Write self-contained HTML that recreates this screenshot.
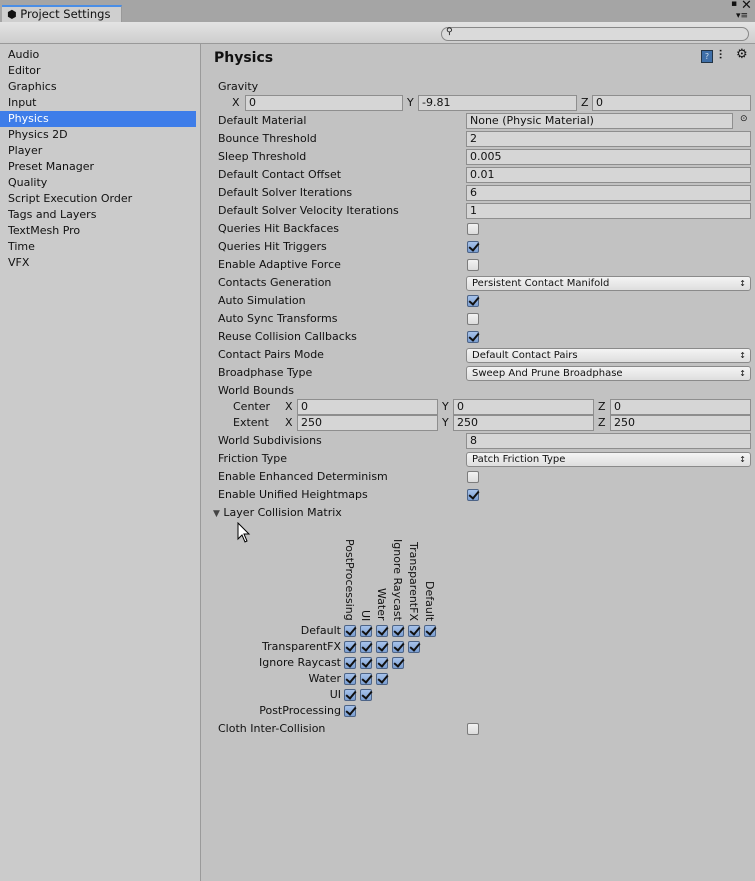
<!DOCTYPE html>
<html><head><meta charset="utf-8"><style>
*{margin:0;padding:0;box-sizing:border-box}
body{width:755px;height:881px;background:#c2c2c2;font-family:"DejaVu Sans","Liberation Sans",sans-serif;font-size:11px;color:#111;position:relative;overflow:hidden}
.a{position:absolute;white-space:nowrap}
.l{position:absolute;height:16px;line-height:16px;white-space:nowrap}
.f{position:absolute;height:16px;line-height:14px;background:#d6d6d6;border:1px solid #8e8e8e;padding-left:3px;white-space:nowrap}
.cb{position:absolute;width:12px;height:12px;border:1px solid #7c7c7c;border-radius:2px;background:linear-gradient(#f2f2f2,#dcdcdc)}
.ck{background:linear-gradient(#a6c2ea,#7c9fd2);border-color:#4d6487}
.ck::after{content:"";position:absolute;left:3px;top:-1px;width:4px;height:8px;border:solid #111;border-width:0 2px 2px 0;transform:rotate(40deg)}
.dd{position:absolute;left:466px;width:285px;height:15px;line-height:13px;border:1px solid #8a8a8a;border-radius:3px;background:linear-gradient(#f4f4f4,#dedede);padding-left:5px;font-size:10px}
.dd::after{content:"\2195";position:absolute;right:4px;top:0;font-size:8px}
.side div{position:absolute;left:8px;height:16px;line-height:16px}
.vt{position:absolute;writing-mode:vertical-rl;line-height:14px;width:14px;bottom:260px}
</style></head><body>
<div class="a" style="left:0;top:0;width:755px;height:22px;background:#a5a5a5"></div>
<div class="a" style="left:2px;top:5px;width:120px;height:18px;background:#cfcfcf;border-top:2px solid #4a8ee6;border-right:1px solid #999"></div>
<div class="a" style="left:7px;top:6px;font-size:11.5px;line-height:16px"><span style="font-size:11px">⬢</span> Project Settings</div>
<div class="a" style="left:731px;top:-1px;font-size:9px">▪</div>
<div class="a" style="left:741px;top:-2px;font-size:13px">✕</div>
<div class="a" style="left:736px;top:11px;font-size:9px">▾≡</div>
<div class="a" style="left:0;top:22px;width:755px;height:22px;background:linear-gradient(#e4e4e4,#cdcdcd);border-bottom:1px solid #999"></div>
<div class="a" style="left:441px;top:27px;width:308px;height:14px;border:1px solid #888;border-radius:7px;background:#dadada"></div>
<div class="a" style="left:446px;top:27px;font-size:9px">⚲</div>
<div class="a" style="left:0;top:44px;width:201px;height:837px;background:#cbcbcb;border-right:1px solid #9a9a9a"></div>
<div class="a" style="left:0;top:111px;width:196px;height:16px;background:#3e7de9"></div>
<div class="side">
<div style="top:47px">Audio</div><div style="top:63px">Editor</div><div style="top:79px">Graphics</div><div style="top:95px">Input</div>
<div style="top:111px;color:#fff">Physics</div><div style="top:127px">Physics 2D</div><div style="top:143px">Player</div><div style="top:159px">Preset Manager</div>
<div style="top:175px">Quality</div><div style="top:191px">Script Execution Order</div><div style="top:207px">Tags and Layers</div><div style="top:223px">TextMesh Pro</div>
<div style="top:239px">Time</div><div style="top:255px">VFX</div></div>
<div class="a" style="left:214px;top:48px;font-size:14px;font-weight:bold;line-height:20px">Physics</div>
<div class="a" style="left:701px;top:50px;width:12px;height:13px;background:#3f6fa8;border:1px solid #234;color:#cde;font-size:8px;text-align:center;line-height:11px">?</div>
<div class="a" style="left:719px;top:48px;font-size:12px;font-weight:bold">⫶</div>
<div class="a" style="left:736px;top:47px;font-size:13px">⚙</div>

<div class="l" style="left:218px;top:79px">Gravity</div>
<div class="l" style="left:232px;top:95px">X</div><div class="f" style="left:245px;top:95px;width:158px">0</div>
<div class="l" style="left:407px;top:95px">Y</div><div class="f" style="left:418px;top:95px;width:159px">-9.81</div>
<div class="l" style="left:581px;top:95px">Z</div><div class="f" style="left:592px;top:95px;width:159px">0</div>

<div class="l" style="left:218px;top:113px">Default Material</div><div class="f" style="left:466px;top:113px;width:267px">None (Physic Material)</div>
<div class="a" style="left:740px;top:114px;font-size:9px">⊙</div>
<div class="l" style="left:218px;top:131px">Bounce Threshold</div><div class="f" style="left:466px;top:131px;width:285px">2</div>
<div class="l" style="left:218px;top:149px">Sleep Threshold</div><div class="f" style="left:466px;top:149px;width:285px">0.005</div>
<div class="l" style="left:218px;top:167px">Default Contact Offset</div><div class="f" style="left:466px;top:167px;width:285px">0.01</div>
<div class="l" style="left:218px;top:185px">Default Solver Iterations</div><div class="f" style="left:466px;top:185px;width:285px">6</div>
<div class="l" style="left:218px;top:203px">Default Solver Velocity Iterations</div><div class="f" style="left:466px;top:203px;width:285px">1</div>
<div class="l" style="left:218px;top:221px">Queries Hit Backfaces</div><div class="cb" style="left:467px;top:223px"></div>
<div class="l" style="left:218px;top:239px">Queries Hit Triggers</div><div class="cb ck" style="left:467px;top:241px"></div>
<div class="l" style="left:218px;top:257px">Enable Adaptive Force</div><div class="cb" style="left:467px;top:259px"></div>
<div class="l" style="left:218px;top:275px">Contacts Generation</div><div class="dd" style="top:276px">Persistent Contact Manifold</div>
<div class="l" style="left:218px;top:293px">Auto Simulation</div><div class="cb ck" style="left:467px;top:295px"></div>
<div class="l" style="left:218px;top:311px">Auto Sync Transforms</div><div class="cb" style="left:467px;top:313px"></div>
<div class="l" style="left:218px;top:329px">Reuse Collision Callbacks</div><div class="cb ck" style="left:467px;top:331px"></div>
<div class="l" style="left:218px;top:347px">Contact Pairs Mode</div><div class="dd" style="top:348px">Default Contact Pairs</div>
<div class="l" style="left:218px;top:365px">Broadphase Type</div><div class="dd" style="top:366px">Sweep And Prune Broadphase</div>
<div class="l" style="left:218px;top:383px">World Bounds</div>
<div class="l" style="left:233px;top:399px">Center</div>
<div class="l" style="left:285px;top:399px">X</div><div class="f" style="left:297px;top:399px;width:141px">0</div>
<div class="l" style="left:442px;top:399px">Y</div><div class="f" style="left:453px;top:399px;width:141px">0</div>
<div class="l" style="left:598px;top:399px">Z</div><div class="f" style="left:610px;top:399px;width:141px">0</div>
<div class="l" style="left:233px;top:415px">Extent</div>
<div class="l" style="left:285px;top:415px">X</div><div class="f" style="left:297px;top:415px;width:141px">250</div>
<div class="l" style="left:442px;top:415px">Y</div><div class="f" style="left:453px;top:415px;width:141px">250</div>
<div class="l" style="left:598px;top:415px">Z</div><div class="f" style="left:610px;top:415px;width:141px">250</div>
<div class="l" style="left:218px;top:433px">World Subdivisions</div><div class="f" style="left:466px;top:433px;width:285px">8</div>
<div class="l" style="left:218px;top:451px">Friction Type</div><div class="dd" style="top:452px">Patch Friction Type</div>
<div class="l" style="left:218px;top:469px">Enable Enhanced Determinism</div><div class="cb" style="left:467px;top:471px"></div>
<div class="l" style="left:218px;top:487px">Enable Unified Heightmaps</div><div class="cb ck" style="left:467px;top:489px"></div>
<div class="l" style="left:213px;top:505px"><span style="font-size:9px;color:#444">▼</span> Layer Collision Matrix</div>
<svg class="a" style="left:237px;top:522px" width="14" height="22" viewBox="0 0 14 22"><path d="M1 1 L1 17 L5 13 L8 20 L10 19 L7 12 L12 12 Z" fill="#fff" stroke="#000" stroke-width="1"/></svg>

<div class="vt" style="left:342px">PostProcessing</div>
<div class="vt" style="left:358px">UI</div>
<div class="vt" style="left:374px">Water</div>
<div class="vt" style="left:390px">Ignore Raycast</div>
<div class="vt" style="left:406px">TransparentFX</div>
<div class="vt" style="left:422px">Default</div>

<div class="l" style="left:200px;width:141px;text-align:right;top:623px">Default</div>
<div class="l" style="left:200px;width:141px;text-align:right;top:639px">TransparentFX</div>
<div class="l" style="left:200px;width:141px;text-align:right;top:655px">Ignore Raycast</div>
<div class="l" style="left:200px;width:141px;text-align:right;top:671px">Water</div>
<div class="l" style="left:200px;width:141px;text-align:right;top:687px">UI</div>
<div class="l" style="left:200px;width:141px;text-align:right;top:703px">PostProcessing</div>

<div class="cb ck" style="left:344px;top:625px"></div><div class="cb ck" style="left:360px;top:625px"></div><div class="cb ck" style="left:376px;top:625px"></div><div class="cb ck" style="left:392px;top:625px"></div><div class="cb ck" style="left:408px;top:625px"></div><div class="cb ck" style="left:424px;top:625px"></div>
<div class="cb ck" style="left:344px;top:641px"></div><div class="cb ck" style="left:360px;top:641px"></div><div class="cb ck" style="left:376px;top:641px"></div><div class="cb ck" style="left:392px;top:641px"></div><div class="cb ck" style="left:408px;top:641px"></div>
<div class="cb ck" style="left:344px;top:657px"></div><div class="cb ck" style="left:360px;top:657px"></div><div class="cb ck" style="left:376px;top:657px"></div><div class="cb ck" style="left:392px;top:657px"></div>
<div class="cb ck" style="left:344px;top:673px"></div><div class="cb ck" style="left:360px;top:673px"></div><div class="cb ck" style="left:376px;top:673px"></div>
<div class="cb ck" style="left:344px;top:689px"></div><div class="cb ck" style="left:360px;top:689px"></div>
<div class="cb ck" style="left:344px;top:705px"></div>

<div class="l" style="left:218px;top:721px">Cloth Inter-Collision</div><div class="cb" style="left:467px;top:723px"></div>
</body></html>
